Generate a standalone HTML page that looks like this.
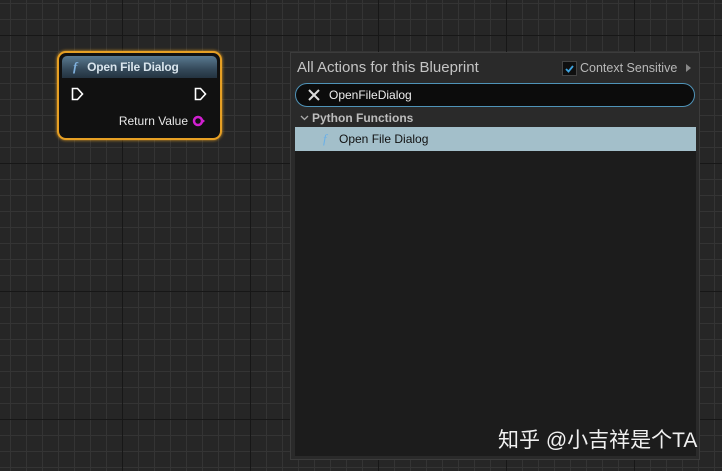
<!DOCTYPE html>
<html><head><style>
*{margin:0;padding:0;box-sizing:border-box}
body{width:722px;height:471px;overflow:hidden;position:relative;font-family:"Liberation Sans",sans-serif;
background-color:#262626;
background-image:
linear-gradient(90deg,#171717 1px,transparent 1px),
linear-gradient(0deg,#171717 1px,transparent 1px),
linear-gradient(90deg,#343434 1px,transparent 1px),
linear-gradient(0deg,#343434 1px,transparent 1px);
background-size:128px 128px,128px 128px,16px 16px,16px 16px;
background-position:122px 0,0 36px,10px 0,0 4px;}
.node{position:absolute;left:57px;top:51px;width:165px;height:89px;border:2px solid #e7a024;border-radius:9px;background:#111;box-shadow:0 0 3px #e7a024}
.nh{position:absolute;left:3px;top:3px;right:3px;height:22px;border-radius:5px 5px 0 0;background:linear-gradient(180deg,#5a7a90,#34495a 60%,#243340);color:#d8e4ec;font-weight:bold;font-size:12px;line-height:22px;padding-left:11px;letter-spacing:-0.2px}
.nh i{font-family:"Liberation Serif",serif;color:#7fb0dc;margin-right:10px;font-size:13px}
.pin{position:absolute;width:13px;height:14px}
.rv{position:absolute;right:32px;top:61px;color:#e8e8e8;font-size:12px}
.panel{position:absolute;left:290px;top:52px;width:410px;height:408px;background:#2a2a2a;border:1px solid #3c3c3c}
.title{position:absolute;left:6px;top:6px;color:#c4c4c4;font-size:15px}
.cb{position:absolute;left:271px;top:8px;width:15px;height:15px;background:#0f0f0f;border:1px solid #444}
.cs{position:absolute;left:289px;top:8px;color:#b8b8b8;font-size:12.5px}
.tri{position:absolute;left:395px;top:11px;width:0;height:0;border-left:5px solid #888;border-top:4px solid transparent;border-bottom:4px solid transparent}
.search{position:absolute;left:4px;top:30px;width:400px;height:24px;border:1px solid #4f93b8;border-radius:12px;background:#0c0c0c;color:#eee;font-size:12px;line-height:22px;padding-left:33px}
.x{position:absolute;left:12px;top:5px}
.cat{position:absolute;left:5px;top:56px;width:400px;height:18px;color:#bdbdbd;font-weight:bold;font-size:12px;line-height:18px;padding-left:16px}
.list{position:absolute;left:4px;top:74px;width:401px;height:329px;background:#1c1c1c}
.sel{position:absolute;left:0;top:0;width:401px;height:24px;background:#a3bfca;color:#111;font-size:12px;line-height:24px;padding-left:44px}
.sel i{position:absolute;left:28px;font-family:"Liberation Serif",serif;color:#6ab0e8;font-size:13px}
.wm{position:absolute;left:498px;top:424px;color:#f0f0f0;font-size:21px;font-family:"Liberation Sans","Noto Sans CJK SC",sans-serif}
</style></head><body>
<div class="node">
<div class="nh"><i>f</i>Open File Dialog</div>
<svg class="pin" style="left:12px;top:34px" viewBox="0 0 13 14"><path d="M1.5 1.5H6.5L11.5 7L6.5 12.5H1.5Z" fill="none" stroke="#fff" stroke-width="1.6"/></svg>
<svg class="pin" style="left:135px;top:34px" viewBox="0 0 13 14"><path d="M1.5 1.5H6.5L11.5 7L6.5 12.5H1.5Z" fill="none" stroke="#fff" stroke-width="1.6"/></svg>
<div class="rv">Return Value</div>
<svg style="position:absolute;left:133px;top:62px" width="14" height="12" viewBox="0 0 14 12"><circle cx="6" cy="6" r="4" fill="none" stroke="#d020d0" stroke-width="2.5"/><path d="M10 3.5L13 6L10 8.5Z" fill="#d020d0"/></svg>
</div>
<div class="panel">
<div class="title">All Actions for this Blueprint</div>
<div class="cb"><svg width="13" height="13" viewBox="0 0 13 13" style="position:absolute;left:0;top:0"><path d="M3 7L5.5 9.5L10 4" fill="none" stroke="#3fa4e0" stroke-width="1.8"/></svg></div>
<div class="cs">Context Sensitive</div>
<div class="tri"></div>
<div class="search"><svg class="x" width="12" height="12" viewBox="0 0 12 12"><path d="M1 1L11 11M11 1L1 11" stroke="#ddd" stroke-width="2"/></svg>OpenFileDialog</div>
<div class="cat"><svg style="position:absolute;left:4px;top:6px" width="9" height="6" viewBox="0 0 9 6"><path d="M1 1L4.5 4.5L8 1" fill="none" stroke="#aaa" stroke-width="1.3"/></svg>Python Functions</div>
<div class="list"><div class="sel"><i>f</i>Open File Dialog</div></div>
</div>
<div class="wm">知乎 @小吉祥是个TA</div>
</body></html>
